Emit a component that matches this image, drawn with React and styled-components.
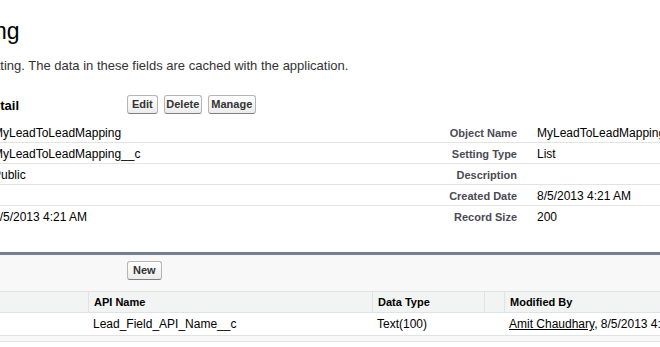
import React from 'react';
import styled, { createGlobalStyle } from 'styled-components';

const GlobalStyle = createGlobalStyle`
  html, body {
    margin: 0;
    padding: 0;
    background: #fff;
    overflow: hidden;
  }
  body {
    font-family: Arial, "Liberation Sans", Helvetica, sans-serif;
    color: #000;
  }
`;

// page is scrolled sideways in the screenshot, so the whole sheet starts left of the window
const Page = styled.div`
  margin-left: -280px;
  width: 960px;
  padding-top: 17px;
`;

const Title = styled.h1`
  margin: 0;
  padding-left: 54px;
  font-size: 23px;
  line-height: 28px;
  font-weight: normal;
  color: #000;
`;

const Description = styled.div`
  margin-top: 13px;
  padding-left: 78px;
  font-size: 13px;
  line-height: 16px;
  color: #333;
`;

const BlockHeader = styled.div`
  display: flex;
  align-items: center;
  margin-top: ${(p) => p.$top || 0}px;
  padding: ${(p) => p.$pad || '0'};
`;

const BlockTitle = styled.h2`
  margin: 0;
  flex: 0 0 407px;
  box-sizing: border-box;
  padding: 3px 0 0 164px;
  font-size: 13px;
  line-height: 16px;
  font-weight: bold;
  color: #000;
`;

const Buttons = styled.div`
  display: flex;
  gap: 6px;
`;

const Button = styled.button`
  font-family: Arial, "Liberation Sans", sans-serif;
  font-size: 11px;
  font-weight: bold;
  line-height: 13px;
  color: #333;
  padding: 2px ${(p) => p.$px || 3}px;
  margin: 0;
  border: 1px solid #b5b5b5;
  border-bottom-color: #7f7f7f;
  border-radius: 3px;
  background: linear-gradient(#ffffff, #ececec);
  cursor: pointer;
`;

const DetailGrid = styled.div`
  display: grid;
  grid-template-columns: 173px 390px 154px 1fr;
  margin-top: 8px;
  margin-left: 90px;
`;

const LabelCell = styled.div`
  padding: 4px 10px 1px 2px;
  text-align: right;
  font-size: 11px;
  font-weight: bold;
  line-height: 15px;
  color: #4a4a56;
  white-space: nowrap;
  border-bottom: 1px solid ${(p) => (p.$last ? 'transparent' : '#e3e3e3')};
`;

const DataCell = styled.div`
  padding: 4px 2px 1px 10px;
  font-size: 12px;
  line-height: 15px;
  color: #000;
  white-space: nowrap;
  overflow: hidden;
  border-bottom: 1px solid ${(p) => (p.$last ? 'transparent' : '#e3e3e3')};
`;

const RelatedList = styled.div`
  margin-top: 25px;
  border-top: 3px solid #747e96;
  background: #f8f8f8;
  padding-bottom: 5px;
  border-bottom: 1px solid #e3e3e3;
`;

const ListGrid = styled.div`
  display: grid;
  grid-template-columns: 368px 284px 112px 20px 1fr;
`;

const HeadCell = styled.div`
  background: #f2f3f3;
  border-top: 1px solid #e0e3e5;
  border-bottom: 1px solid #e0e3e5;
  border-left: 1px solid ${(p) => (p.$first ? 'transparent' : '#e0e3e5')};
  padding: 4px 2px 3px 5px;
  font-size: 11px;
  font-weight: bold;
  line-height: 13px;
  color: #000;
  white-space: nowrap;
`;

const RowCell = styled.div`
  background: #fff;
  border-bottom: 1px solid #e3e3e3;
  padding: 4px 2px 3px 5px;
  font-size: 12px;
  line-height: 15px;
  color: #000;
  white-space: nowrap;
  overflow: hidden;
`;

const UserLink = styled.a`
  color: #000;
  text-decoration: underline;
`;

const details = [
  ['Label', 'MyLeadToLeadMapping', 'Object Name', 'MyLeadToLeadMapping'],
  ['API Name', 'MyLeadToLeadMapping__c', 'Setting Type', 'List'],
  ['Visibility', 'Public', 'Description', ''],
  ['Namespace Prefix', '', 'Created Date', '8/5/2013 4:21 AM'],
  ['Last Modified Date', '8/5/2013 4:21 AM', 'Record Size', '200'],
];

export default function App() {
  return (
    <>
      <GlobalStyle />
      <Page>
        <Title>MyLeadToLeadMapping</Title>
        <Description>
          Define the fields for this custom setting. The data in these fields are cached with the application.
        </Description>

        <BlockHeader $top={21}>
          <BlockTitle>Custom Setting Detail</BlockTitle>
          <Buttons>
            <Button $px={4}>Edit</Button>
            <Button $px={1.5}>Delete</Button>
            <Button $px={2.5}>Manage</Button>
          </Buttons>
        </BlockHeader>

        <DetailGrid>
          {details.map((row, i) => {
            const last = i === details.length - 1;
            return (
              <React.Fragment key={row[0]}>
                <LabelCell $last={last}>{row[0]}</LabelCell>
                <DataCell $last={last}>{row[1] || '\u00a0'}</DataCell>
                <LabelCell $last={last}>{row[2]}</LabelCell>
                <DataCell $last={last}>{row[3] || '\u00a0'}</DataCell>
              </React.Fragment>
            );
          })}
        </DetailGrid>

        <RelatedList>
          <BlockHeader $pad="6px 0 11px">
            <BlockTitle>Custom Fields</BlockTitle>
            <Buttons>
              <Button $px={5}>New</Button>
            </Buttons>
          </BlockHeader>
          <ListGrid>
            <HeadCell $first>Field Label</HeadCell>
            <HeadCell>API Name</HeadCell>
            <HeadCell>Data Type</HeadCell>
            <HeadCell></HeadCell>
            <HeadCell>Modified By</HeadCell>

            <RowCell>Lead Field</RowCell>
            <RowCell>Lead_Field_API_Name__c</RowCell>
            <RowCell>Text(100)</RowCell>
            <RowCell></RowCell>
            <RowCell>
              <UserLink href="#">Amit Chaudhary</UserLink>, 8/5/2013 4:21 AM
            </RowCell>
          </ListGrid>
        </RelatedList>
      </Page>
    </>
  );
}
